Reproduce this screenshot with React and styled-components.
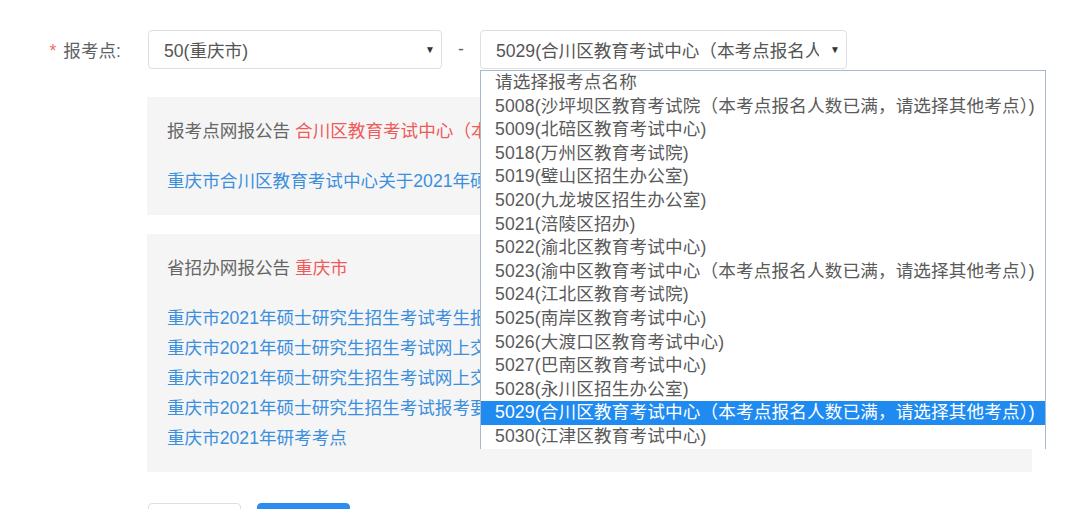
import React from 'react';
import styled, { createGlobalStyle } from 'styled-components';

const GlobalStyle = createGlobalStyle`
  body {
    margin: 0;
    background: #fff;
    font-family: "Liberation Sans", "Noto Sans CJK SC", sans-serif;
    font-size: 17.6px;
    color: #606266;
  }
`;

const SITES = [
  '请选择报考点名称',
  '5008(沙坪坝区教育考试院（本考点报名人数已满，请选择其他考点）)',
  '5009(北碚区教育考试中心)',
  '5018(万州区教育考试院)',
  '5019(璧山区招生办公室)',
  '5020(九龙坡区招生办公室)',
  '5021(涪陵区招办)',
  '5022(渝北区教育考试中心)',
  '5023(渝中区教育考试中心（本考点报名人数已满，请选择其他考点）)',
  '5024(江北区教育考试院)',
  '5025(南岸区教育考试中心)',
  '5026(大渡口区教育考试中心)',
  '5027(巴南区教育考试中心)',
  '5028(永川区招生办公室)',
  '5029(合川区教育考试中心（本考点报名人数已满，请选择其他考点）)',
  '5030(江津区教育考试中心)',
];

const SELECTED = 14;

const PROVINCE_LINKS = [
  '重庆市2021年硕士研究生招生考试考生报名须知',
  '重庆市2021年硕士研究生招生考试网上交费须知',
  '重庆市2021年硕士研究生招生考试网上交费操作指南',
  '重庆市2021年硕士研究生招生考试报考要求',
  '重庆市2021年研考考点',
];

function App() {
  return (
    <Page>
      <GlobalStyle />
      <FormRow>
        <Label>
          <Required>*</Required>报考点:
        </Label>
        <Select $width={294}>
          <SelectText>50(重庆市)</SelectText>
          <Caret>▼</Caret>
        </Select>
        <Dash>-</Dash>
        <SelectWrap>
          <Select $width={367}>
            <SelectText>{SITES[SELECTED]}</SelectText>
            <Caret>▼</Caret>
          </Select>
          <Options>
            {SITES.map((s, i) => (
              <Option key={s} $active={i === SELECTED}>{s}</Option>
            ))}
          </Options>
        </SelectWrap>
      </FormRow>

      <Notices>
        <Panel>
          <PanelTitle>
            报考点网报公告 <Hot>合川区教育考试中心（本考点报名人数已满，请选择其他考点）</Hot>
          </PanelTitle>
          <LinkList>
            <NoticeLink href="#">重庆市合川区教育考试中心关于2021年硕士研究生招生考试网上报名的公告</NoticeLink>
          </LinkList>
        </Panel>

        <Panel>
          <PanelTitle>
            省招办网报公告 <Hot>重庆市</Hot>
          </PanelTitle>
          <LinkList>
            {PROVINCE_LINKS.map((t) => (
              <NoticeLink key={t} href="#">{t}</NoticeLink>
            ))}
          </LinkList>
        </Panel>
      </Notices>

      <Actions>
        <Button>上一步</Button>
        <Button $primary>下一步</Button>
      </Actions>
    </Page>
  );
}

const Page = styled.div`
  padding: 30px 0 40px;
`;

const FormRow = styled.div`
  display: flex;
  align-items: center;
`;

const Label = styled.label`
  width: 121px;
  flex-shrink: 0;
  margin-right: 27px;
  text-align: right;
  color: #606266;
  white-space: nowrap;
`;

const Required = styled.span`
  color: #f56c6c;
  margin-right: 7px;
`;

const SelectWrap = styled.div`
  position: relative;
`;

const Select = styled.div`
  box-sizing: border-box;
  width: ${(p) => p.$width}px;
  height: 39px;
  display: flex;
  align-items: center;
  padding: 0 6px 0 15px;
  border: 1px solid #dcdfe6;
  border-radius: 4px;
  background: #fff;
  color: #555;
`;

const SelectText = styled.span`
  flex: 1;
  overflow: hidden;
  white-space: nowrap;
`;

const Caret = styled.span`
  font-size: 10px;
  color: #333;
  margin-left: 11px;
`;

const Dash = styled.span`
  width: 38px;
  text-align: center;
  color: #606266;
`;

const Options = styled.ul`
  position: absolute;
  top: 40px;
  left: 0;
  z-index: 10;
  box-sizing: border-box;
  width: 566px;
  margin: 0;
  padding: 0;
  list-style: none;
  background: #fff;
  border: 1px solid #a9b8cc;
  border-bottom: none;
`;

const Option = styled.li`
  height: 23.6px;
  line-height: 23.6px;
  padding-left: 14px;
  white-space: nowrap;
  letter-spacing: 0.15px;
  color: ${(p) => (p.$active ? '#fff' : '#5a5a5a')};
  background: ${(p) => (p.$active ? '#1f8bf0' : 'transparent')};
`;

const Notices = styled.div`
  margin: 28px 0 0 147px;
  width: 885px;
  display: flex;
  flex-direction: column;
  gap: 19px;
`;

const Panel = styled.section`
  background: #f5f5f5;
  padding: 22px 20px 19px;
  overflow: hidden;
  white-space: nowrap;
`;

const PanelTitle = styled.div`
  line-height: 24px;
  color: #666;
`;

const Hot = styled.span`
  color: #ef5b5b;
`;

const LinkList = styled.div`
  margin-top: 23px;
  display: flex;
  flex-direction: column;
`;

const NoticeLink = styled.a`
  line-height: 30px;
  color: #3b8fdd;
  text-decoration: none;
`;

const Actions = styled.div`
  margin: 31px 0 0 148px;
  display: flex;
  gap: 16px;
`;

const Button = styled.button`
  width: 93px;
  height: 40px;
  border-radius: 4px;
  font-family: inherit;
  font-size: 16px;
  border: 1px solid ${(p) => (p.$primary ? '#2d8cf0' : '#dcdfe6')};
  background: ${(p) => (p.$primary ? '#2d8cf0' : '#fff')};
  color: ${(p) => (p.$primary ? '#fff' : '#606266')};
`;

export default App;
